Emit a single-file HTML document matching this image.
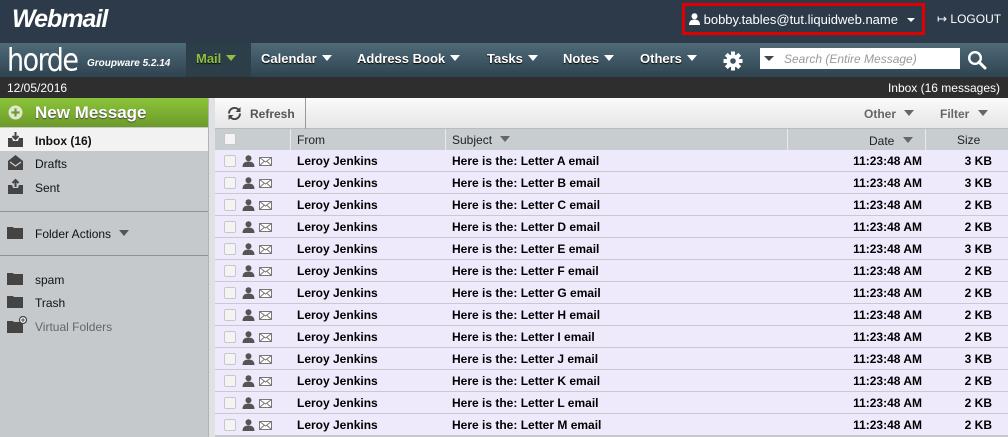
<!DOCTYPE html>
<html><head><style>
*{margin:0;padding:0;box-sizing:border-box}
body{width:1008px;height:437px;overflow:hidden;font-family:"Liberation Sans",Arial,sans-serif;font-size:12px;background:#c5c9cc;position:relative}
.abs{position:absolute}
#top{left:0;top:0;width:1008px;height:43px;background:#2d3a4a}
#nav{left:0;top:43px;width:1008px;height:34px;background:linear-gradient(#4f6a78,#2f4350)}
#date{left:0;top:77px;width:1008px;height:21px;background:#2e2e2e;color:#fff;font-size:12px}
.nv{position:absolute;top:8px;color:#fff;font-weight:bold;font-size:13px;text-shadow:0 1px 1px #000}
.tri{display:inline-block;width:0;height:0;border-left:5px solid transparent;border-right:5px solid transparent;border-top:6px solid currentColor;margin-left:5px;vertical-align:2px}
#side{left:0;top:98px;width:208px;height:339px;background:#c5c9cc}
#split{left:208px;top:98px;width:7px;height:339px;background:#dfe1e2;border-left:1px solid #b0b4b6}
.fi{position:absolute;left:35px;font-size:12px;color:#111}
.row{position:absolute;left:215px;width:793px;height:22px;background:#efeafb;border-bottom:1px solid #c9c9cf;font-weight:bold;font-size:12px;color:#000}
.row span{position:absolute;top:4px}
.cb{position:absolute;left:9px;top:5px;width:12px;height:12px;border:1px solid #c8c8c8;border-radius:2px;background:#f4f4f4}
</style></head><body>
<div id="top" class="abs">
 <div class="abs" style="left:12px;top:5px;color:#fff;font-size:25px;font-weight:900;font-style:italic;letter-spacing:-1px;font-family:'Liberation Sans',sans-serif">Webmail</div>
 <div class="abs" style="left:682px;top:3px;width:243px;height:32px;border:3px solid #e00000"></div>
 <div class="abs" style="left:689px;top:12px;color:#fff;font-size:13px"><svg width="11" height="12" viewBox="0 0 11 12" style="vertical-align:-1px"><circle cx="5.5" cy="3.2" r="3" fill="#fff"/><path d="M0 12 Q0 6.5 5.5 6.5 Q11 6.5 11 12Z" fill="#fff"/></svg> bobby.tables@tut.liquidweb.name</div>
 <div class="abs" style="left:907px;top:18px;border-left:4px solid transparent;border-right:4px solid transparent;border-top:4px solid #fff"></div>
 <div class="abs" style="left:937px;top:12px;color:#fff;font-size:12px">&#x21A6; LOGOUT</div>
</div>
<div id="nav" class="abs">
 <div class="abs" style="left:7px;top:1px;color:#fff;font-size:27px;letter-spacing:-1.5px;font-family:'DejaVu Sans',sans-serif;line-height:30px;transform:scaleY(1.15);transform-origin:top left">horde</div>
 <div class="abs" style="left:87px;top:15px;color:#fff;font-size:10px;font-weight:bold;font-style:italic">Groupware 5.2.14</div>
 <div class="abs" style="left:186px;top:0;width:65px;height:34px;background:#2c3e48"></div>
 <div class="nv" style="left:196px;color:#8fc040">Mail<span class="tri" style="color:#8fc040"></span></div>
 <div class="nv" style="left:261px">Calendar<span class="tri"></span></div>
 <div class="nv" style="left:357px">Address Book<span class="tri"></span></div>
 <div class="nv" style="left:487px">Tasks<span class="tri"></span></div>
 <div class="nv" style="left:563px">Notes<span class="tri"></span></div>
 <div class="nv" style="left:640px">Others<span class="tri"></span></div>
 <svg class="abs" style="left:723px;top:8px" width="20" height="20" viewBox="0 0 20 20"><g fill="#fff"><circle cx="10" cy="10" r="6.5"/><rect x="8" y="0.5" width="4" height="19"/><rect x="0.5" y="8" width="19" height="4"/><rect x="8" y="0.5" width="4" height="19" transform="rotate(45 10 10)"/><rect x="8" y="0.5" width="4" height="19" transform="rotate(-45 10 10)"/></g><circle cx="10" cy="10" r="2.8" fill="#3c5260"/></svg>
 <div class="abs" style="left:760px;top:5px;width:200px;height:21px;background:#fff"></div>
 <div class="abs" style="left:764px;top:13px;border-left:5px solid transparent;border-right:5px solid transparent;border-top:5px solid #444"></div>
 <div class="abs" style="left:784px;top:9px;color:#999;font-style:italic;font-size:12px">Search (Entire Message)</div>
 <svg class="abs" style="left:967px;top:7px" width="20" height="20" viewBox="0 0 20 20"><circle cx="8" cy="8" r="5.8" stroke="#fff" stroke-width="2.4" fill="none"/><path d="M12 12L18 18" stroke="#fff" stroke-width="3" stroke-linecap="round"/></svg>
</div>
<div id="date" class="abs"><span class="abs" style="left:7px;top:4px">12/05/2016</span><span class="abs" style="right:8px;top:4px">Inbox (16 messages)</span></div>
<div id="side" class="abs">
 <div class="abs" style="left:0;top:0;width:208px;height:29px;background:linear-gradient(#8cc43a,#6c9a2a)"></div>
 <svg class="abs" style="left:8px;top:7px" width="15" height="15"><circle cx="7.5" cy="7.5" r="7" fill="#dfe8cf"/><path d="M7.5 3.5v8M3.5 7.5h8" stroke="#6e9a30" stroke-width="2.2"/></svg>
 <div class="abs" style="left:35px;top:5px;color:#fff;font-size:17px;font-weight:bold;text-shadow:0 1px 1px #444">New Message</div>
 <div class="abs" style="left:0;top:30px;width:208px;height:23px;background:#f2f2f2"></div>
 <div class="fi" style="top:36px;font-weight:bold">Inbox (16)</div>
 <div class="fi" style="top:59px">Drafts</div>
 <div class="fi" style="top:83px">Sent</div>
 <div class="abs" style="left:0;top:113px;width:208px;border-top:1px solid #8e9295"></div>
 <div class="fi" style="top:129px">Folder Actions <span class="tri" style="color:#555"></span></div>
 <div class="abs" style="left:0;top:157px;width:208px;border-top:1px solid #8e9295"></div>
 <div class="fi" style="top:175px">spam</div>
 <div class="fi" style="top:198px">Trash</div>
 <div class="fi" style="top:222px;color:#666">Virtual Folders</div>
 <svg class="abs" style="left:7px;top:33px" width="17" height="17"><path d="M1 7h4l1 3h5l1-3h4v9H1z" fill="#444"/><path d="M8.5 1v7M5.5 5l3 3 3-3" stroke="#444" stroke-width="2" fill="none"/></svg>
 <svg class="abs" style="left:7px;top:56px" width="17" height="17"><path d="M1 7L8.5 1 16 7v9H1z" fill="#444"/><path d="M3 8l5.5 4 5.5-4" stroke="#ccc" stroke-width="1.3" fill="none"/></svg>
 <svg class="abs" style="left:7px;top:80px" width="17" height="17"><path d="M1 7h4l1 3h5l1-3h4v9H1z" fill="#444"/><path d="M8.5 9V2M5.5 5l3-3 3 3" stroke="#444" stroke-width="2" fill="none"/></svg>
 <svg class="abs" style="left:7px;top:126px" width="17" height="15"><path d="M0 3h6l1 1h9v11H0z" fill="#444"/></svg>
 <svg class="abs" style="left:7px;top:172px" width="17" height="15"><path d="M0 3h6l1 1h9v11H0z" fill="#444"/></svg>
 <svg class="abs" style="left:7px;top:195px" width="17" height="15"><path d="M0 3h6l1 1h9v11H0z" fill="#444"/></svg>
 <svg class="abs" style="left:7px;top:218px" width="20" height="17"><path d="M0 5h6l1 1h9v11H0z" fill="#444"/><circle cx="16" cy="4" r="3.5" fill="#fff" stroke="#444" stroke-width="1.2"/><path d="M16 2v4M14 4h4" stroke="#444"/></svg>
</div>
<div id="split" class="abs"></div>
<div class="abs" style="left:215px;top:98px;width:793px;height:31px;background:linear-gradient(#fafafa,#e6e6e6);border-bottom:1px solid #bbb"></div>
<div class="abs" style="left:305px;top:98px;height:31px;border-left:1px solid #999"></div>
<svg class="abs" style="left:226px;top:105px" width="17" height="17" viewBox="0 0 17 17"><path d="M3 8.5A5.5 5.5 0 0 1 13 5.3M14 8.5A5.5 5.5 0 0 1 4 11.7" stroke="#444" stroke-width="2" fill="none"/><path d="M14.5 2v5h-5zM2.5 15v-5h5z" fill="#444"/></svg>
<div class="abs" style="left:250px;top:107px;color:#555;font-weight:bold;font-size:12px">Refresh</div>
<div class="abs" style="left:864px;top:107px;color:#666;font-weight:bold">Other <span class="tri" style="color:#666"></span></div>
<div class="abs" style="left:940px;top:107px;color:#666;font-weight:bold">Filter <span class="tri" style="color:#666"></span></div>
<div class="abs" style="left:215px;top:129px;width:793px;height:21px;background:#c8cdd0;font-size:12px;color:#222">
 <div class="cb" style="top:4px"></div>
 <span class="abs" style="left:75px;top:0;height:21px;border-left:1px solid #e8eaeb"></span>
 <span class="abs" style="left:82px;top:4px">From</span>
 <span class="abs" style="left:230px;top:0;height:21px;border-left:1px solid #e8eaeb"></span>
 <span class="abs" style="left:237px;top:4px">Subject <span class="tri" style="color:#666"></span></span>
 <span class="abs" style="left:572px;top:0;height:21px;border-left:1px solid #e8eaeb"></span>
 <span class="abs" style="left:654px;top:5px">Date <span class="tri" style="color:#666"></span></span>
 <span class="abs" style="left:710px;top:0;height:21px;border-left:1px solid #e8eaeb"></span>
 <span class="abs" style="left:742px;top:4px">Size</span>
</div>
<div id="rows"></div>
<script>
var L="ABCDEFGHIJKLM",S=[3,3,2,2,3,2,2,2,2,3,2,2,2],h="";
for(var i=0;i<13;i++){h+='<div class="row" style="top:'+(150+i*22)+'px"><div class="cb"></div><svg style="position:absolute;left:27px;top:5px" width="13" height="12"><circle cx="6.5" cy="3.2" r="3" fill="#555"/><path d="M0.5 12Q0.5 6.5 6.5 6.5Q12.5 6.5 12.5 12Z" fill="#555"/></svg><svg style="position:absolute;left:44px;top:7px" width="13" height="9"><rect x="0.5" y="0.5" width="12" height="8" fill="#fff" stroke="#777"/><path d="M0.5 0.5l6 4.5 6-4.5M0.5 8.5l4.5-4M12.5 8.5l-4.5-4" stroke="#777" fill="none"/></svg><span style="left:82px">Leroy Jenkins</span><span style="left:237px">Here is the: Letter '+L[i]+' email</span><span style="right:86px">11:23:48 AM</span><span style="right:16px">'+S[i]+' KB</span></div>';}
document.getElementById("rows").innerHTML=h;
</script>
</body></html>
